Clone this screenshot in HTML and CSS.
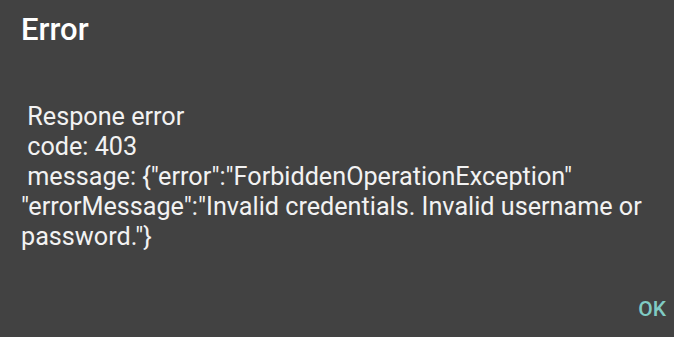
FILE: index.html
```html
<!DOCTYPE html>
<html>
<head>
<meta charset="utf-8">
<link rel="stylesheet" href="styles.css">
</head>
<body>
<div class="dialog">
  <h1 class="title">Error</h1>
  <div class="message"> Respone error
 code: 403
 message: {"error":"ForbiddenOperationException"
"errorMessage":"Invalid credentials. Invalid username or password."}</div>
  <div class="actions"><span class="btn">OK</span></div>
</div>
</body>
</html>
```
FILE: styles.css
```css
html, body {
  margin: 0;
  padding: 0;
  background: #424242;
}
.dialog {
  width: 674px;
  height: 337px;
  box-sizing: border-box;
  display: flex;
  flex-direction: column;
  font-family: Roboto, "Liberation Sans", sans-serif;
  color: #ffffff;
}
.title {
  margin: 0;
  padding: 12px 21px 0 21px;
  font-size: 31px;
  font-weight: 500;
  line-height: 36px;
}
.message {
  margin-top: 54px;
  padding: 0 6px 0 21px;
  font-size: 25.2px;
  line-height: 30px;
  white-space: pre-wrap;
  color: #f2f2f2;
}
.actions {
  margin-top: auto;
  display: flex;
  justify-content: flex-end;
  padding: 0 8px 16px 0;
}
.btn {
  color: #80cbc4;
  font-size: 21px;
  font-weight: 500;
  line-height: 24px;
}
```
